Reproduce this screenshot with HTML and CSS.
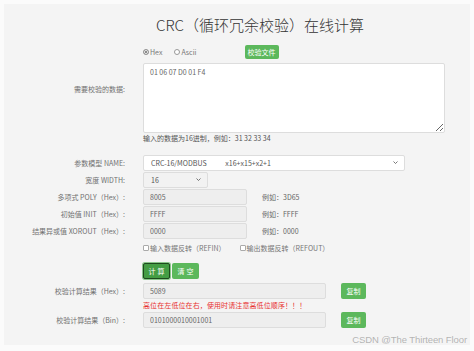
FILE: index.html
```html
<!DOCTYPE html>
<html lang="zh-CN">
<head>
  <meta charset="UTF-8">
  <meta name="viewport" content="width=device-width, initial-scale=1.0">
  <title>CRC（循环冗余校验）在线计算</title>
  <link rel="stylesheet" href="styles.css">
</head>
<body>

  <div class="page">
    <h1 class="title">CRC（循环冗余校验）在线计算</h1>

    <div class="row row-mode">
      <span class="label"></span>
      <div class="field mode">
        <label class="radio"><input type="radio" name="mode" checked>Hex</label>
        <label class="radio radio-ascii"><input type="radio" name="mode">Ascii</label>
        <button class="btn btn-file">校验文件</button>
      </div>
    </div>

    <div class="row row-data">
      <label class="label label-top" for="data">需要校验的数据:</label>
      <textarea id="data" class="textarea">01 06 07 D0 01 F4</textarea>
    </div>

    <div class="row row-help">
      <span class="label"></span>
      <span class="help">输入的数据为16进制，例如：31 32 33 34</span>
    </div>

    <div class="row row-name">
      <label class="label" for="name">参数模型 NAME:</label>
      <div class="select-wrap select-name">
        <select id="name" class="select">
          <option>CRC-16/MODBUS&nbsp;&nbsp;&nbsp;&nbsp;&nbsp;&nbsp;&nbsp;&nbsp;&nbsp;&nbsp;&nbsp;&nbsp;x16+x15+x2+1</option>
        </select>
        <svg class="chevron" viewBox="0 0 10 6"><path d="M1 1l4 4 4-4" fill="none" stroke="#555" stroke-width="1.6"/></svg>
      </div>
    </div>

    <div class="row">
      <label class="label" for="width">宽度 WIDTH:</label>
      <div class="select-wrap select-width">
        <select id="width" class="select">
          <option>16</option>
        </select>
        <svg class="chevron" viewBox="0 0 10 6"><path d="M1 1l4 4 4-4" fill="none" stroke="#555" stroke-width="1.6"/></svg>
      </div>
    </div>

    <div class="row">
      <label class="label" for="poly">多项式 POLY（Hex）:</label>
      <div class="field">
        <input id="poly" class="input input-short" value="8005" disabled>
        <span class="hint">例如：3D65</span>
      </div>
    </div>

    <div class="row">
      <label class="label" for="init">初始值 INIT（Hex）:</label>
      <div class="field">
        <input id="init" class="input input-short" value="FFFF" disabled>
        <span class="hint">例如：FFFF</span>
      </div>
    </div>

    <div class="row">
      <label class="label" for="xorout">结果异或值 XOROUT（Hex）:</label>
      <div class="field">
        <input id="xorout" class="input input-short" value="0000" disabled>
        <span class="hint">例如：0000</span>
      </div>
    </div>

    <div class="row row-checks">
      <span class="label"></span>
      <div class="field">
        <label class="check"><input type="checkbox" disabled>输入数据反转（REFIN）</label>
        <label class="check check-out"><input type="checkbox" disabled>输出数据反转（REFOUT）</label>
      </div>
    </div>

    <div class="row row-actions">
      <span class="label"></span>
      <div class="field">
        <button class="btn btn-calc">计算</button>
        <button class="btn btn-clear">清空</button>
      </div>
    </div>

    <div class="row row-result">
      <label class="label" for="hex">校验计算结果（Hex）:</label>
      <div class="field">
        <input id="hex" class="input input-long" value="5089" readonly>
        <button class="btn btn-copy">复制</button>
      </div>
    </div>

    <div class="row row-warn">
      <span class="label"></span>
      <span class="warn">高位在左低位在右，使用时请注意高低位顺序！！！</span>
    </div>

    <div class="row">
      <label class="label" for="bin">校验计算结果（Bin）:</label>
      <div class="field">
        <input id="bin" class="input input-long" value="0101000010001001" readonly>
        <button class="btn btn-copy">复制</button>
      </div>
    </div>

    <div class="watermark">CSDN @The Thirteen Floor</div>
  </div>

</body>
</html>
```

FILE: styles.css
```css
body {
  margin: 0;
  background-color: #fbfbfb;
  font-family: "Noto Sans CJK SC", "Noto Sans", sans-serif;
  color: #555;
}

.page {
  position: relative;
  margin: 4px;
  height: 341px;
  background-color: #f4f4f4;
  box-sizing: border-box;
  padding-top: 11px;
}

.title {
  margin: 0 0 9px 0;
  font-size: 15px;
  line-height: 20px;
  font-weight: 300;
  text-align: center;
  color: #333;
  padding-left: 46px;
}

.row {
  display: grid;
  grid-template-columns: 121px 1fr;
  column-gap: 18px;
  align-items: center;
  margin-bottom: 1px;
  font-size: 7px;
}

.label {
  text-align: right;
  color: #707070;
  white-space: nowrap;
}

.label-top {
  align-self: start;
  padding-top: 21px;
}

.field {
  display: flex;
  align-items: center;
  height: 16px;
}

.row-mode {
  margin-bottom: 3px;
}

.radio,
.check {
  display: flex;
  align-items: center;
  color: #777;
}

.radio input,
.check input {
  appearance: none;
  margin: 0 1px 0 0;
  width: 6px;
  height: 6px;
  border: 1px solid #999;
  background: #fff;
  box-sizing: border-box;
}

.radio input {
  border-radius: 50%;
}

.radio input:checked {
  box-shadow: inset 0 0 0 1px #fff;
  background: #666;
}

.check input {
  border-color: #aaa;
  border-radius: 1px;
}

.radio-ascii {
  margin-left: 12px;
}

.check-out {
  margin-left: 14px;
}

.btn {
  border: none;
  border-radius: 2px;
  background-color: #5cb85c;
  color: #fff;
  font-family: inherit;
  font-size: 7px;
  padding: 0;
  cursor: pointer;
}

.btn-file {
  margin-left: 48px;
  width: 34px;
  height: 14px;
}

.textarea {
  width: 302px;
  height: 70px;
  box-sizing: border-box;
  border: 1px solid #ddd;
  border-radius: 2px;
  background: #fff;
  padding: 3px 6px;
  font-family: inherit;
  font-size: 7px;
  color: #666;
  resize: vertical;
}

.row-data {
  margin-bottom: 0;
}

.help {
  line-height: 11px;
  color: #555;
}

.row-help {
  margin-bottom: 11px;
}

.select-wrap {
  position: relative;
  height: 16px;
}

.select {
  appearance: none;
  width: 100%;
  height: 16px;
  border: 1px solid #ddd;
  border-radius: 2px;
  background: #fff;
  font-family: inherit;
  font-size: 7px;
  color: #555;
  padding: 0 0 0 7px;
}

.select-name {
  width: 262px;
}

.select-width {
  width: 65px;
}

.select-width .select {
  background: #f2f2f2;
}

.chevron {
  position: absolute;
  right: 7px;
  top: 6px;
  width: 5px;
  height: 3px;
}

.input {
  height: 16px;
  box-sizing: border-box;
  border: 1px solid #ddd;
  border-radius: 2px;
  background: #eee;
  font-family: inherit;
  font-size: 7px;
  color: #666;
  padding: 0 6px;
}

.input-short {
  width: 104px;
}

.input-long {
  width: 183px;
}

.hint {
  margin-left: 15px;
  color: #666;
}

.row-checks {
  margin-top: 2px;
}

.row-checks .field {
  height: 14px;
}

.row-actions {
  margin-top: 8px;
  margin-bottom: 4px;
}

.btn-calc,
.btn-clear {
  width: 27px;
  height: 16px;
  letter-spacing: 2px;
  padding-left: 2px;
}

.btn-calc {
  background-color: #449d44;
  border: 1px solid #1f4a1f;
  box-shadow: 0 0 0 1px #8bc58b;
}

.btn-clear {
  margin-left: 2px;
}

.btn-copy {
  margin-left: 15px;
  width: 25px;
  height: 16px;
}

.warn {
  color: #e8312f;
  line-height: 11px;
  letter-spacing: 0.1px;
}

.row-warn {
  margin-bottom: 1px;
}

.watermark {
  position: absolute;
  right: 3px;
  bottom: 0;
  font-family: "Liberation Sans", sans-serif;
  font-size: 9.5px;
  letter-spacing: -0.1px;
  color: rgba(150, 150, 150, 0.7);
}
```
